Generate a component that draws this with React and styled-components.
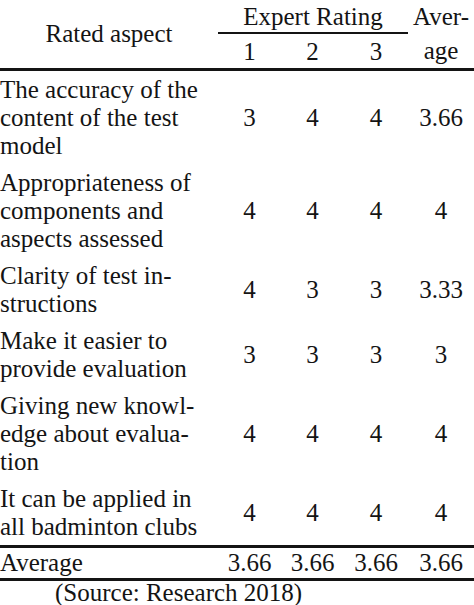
import styled, { createGlobalStyle } from "styled-components";

const GlobalStyle = createGlobalStyle`
  html, body {
    margin: 0;
    padding: 0;
    background: #ffffff;
  }
  body {
    font-family: "Liberation Serif", "Times New Roman", serif;
    color: #141414;
  }
`;

const rows = [
  { aspect: ["The accuracy of the", "content of the test", "model"], scores: ["3", "4", "4"], avg: "3.66" },
  { aspect: ["Appropriateness of", "components and", "aspects assessed"], scores: ["4", "4", "4"], avg: "4" },
  { aspect: ["Clarity of test in-", "structions"], scores: ["4", "3", "3"], avg: "3.33" },
  { aspect: ["Make it easier to", "provide evaluation"], scores: ["3", "3", "3"], avg: "3" },
  { aspect: ["Giving new knowl-", "edge about evalua-", "tion"], scores: ["4", "4", "4"], avg: "4" },
  { aspect: ["It can be applied in", "all badminton clubs"], scores: ["4", "4", "4"], avg: "4" },
];

const Wrapper = styled.div`
  width: 474px;
  height: 605px;
  overflow: hidden;
`;

const Table = styled.table`
  width: 474px;
  border-collapse: collapse;
  table-layout: fixed;
  font-size: 25px;
  line-height: 28px;
`;

const HeadCell = styled.th`
  font-weight: normal;
  text-align: center;
  vertical-align: middle;
  padding: ${(p) => p.$pad || "0"};
  border-bottom: ${(p) => (p.$rule ? "2px solid #141414" : "none")};
  line-height: ${(p) => p.$lh || "28px"};
`;

const HeaderRow = styled.tr`
  border-bottom: ${(p) => (p.$thick ? "3px solid #141414" : "none")};
`;

const BodyRow = styled.tr`
  border-top: ${(p) => (p.$rule ? "3px solid #141414" : "none")};
  border-bottom: ${(p) => (p.$rule ? "3px solid #141414" : "none")};
`;

const AspectCell = styled.td`
  text-align: left;
  vertical-align: middle;
  padding: ${(p) => p.$pad || "5px 0 4px 0"};
  white-space: nowrap;
`;

const NumCell = styled.td`
  text-align: center;
  vertical-align: middle;
  padding: ${(p) => p.$pad || "5px 0 4px 0"};
`;

const Line = styled.div`
  display: block;
`;

const Source = styled.div`
  font-size: 25px;
  line-height: 23px;
  padding-left: 55px;
`;

export default function App() {
  return (
    <Wrapper>
      <GlobalStyle />
      <Table>
        <colgroup>
          <col style={{ width: 218 }} />
          <col style={{ width: 63 }} />
          <col style={{ width: 63 }} />
          <col style={{ width: 64 }} />
          <col style={{ width: 66 }} />
        </colgroup>
        <thead>
          <tr>
            <HeadCell rowSpan={2}>Rated aspect</HeadCell>
            <HeadCell colSpan={3} $rule $pad="2px 0 1px 0">
              Expert Rating
            </HeadCell>
            <HeadCell rowSpan={2} $lh="34px">
              Aver-
              <br />
              age
            </HeadCell>
          </tr>
          <HeaderRow $thick>
            <HeadCell $pad="3px 0 1px 0">1</HeadCell>
            <HeadCell $pad="3px 0 1px 0">2</HeadCell>
            <HeadCell $pad="3px 0 1px 0">3</HeadCell>
          </HeaderRow>
        </thead>
        <tbody>
          {rows.map((r, i) => (
            <BodyRow key={i}>
              <AspectCell>
                {r.aspect.map((l, j) => (
                  <Line key={j}>{l}</Line>
                ))}
              </AspectCell>
              {r.scores.map((s, j) => (
                <NumCell key={j}>{s}</NumCell>
              ))}
              <NumCell>{r.avg}</NumCell>
            </BodyRow>
          ))}
          <BodyRow $rule>
            <AspectCell $pad="1px 0 1px 0">Average</AspectCell>
            <NumCell $pad="1px 0 1px 0">3.66</NumCell>
            <NumCell $pad="1px 0 1px 0">3.66</NumCell>
            <NumCell $pad="1px 0 1px 0">3.66</NumCell>
            <NumCell $pad="1px 0 1px 0">3.66</NumCell>
          </BodyRow>
        </tbody>
      </Table>
      <Source>(Source: Research 2018)</Source>
    </Wrapper>
  );
}
